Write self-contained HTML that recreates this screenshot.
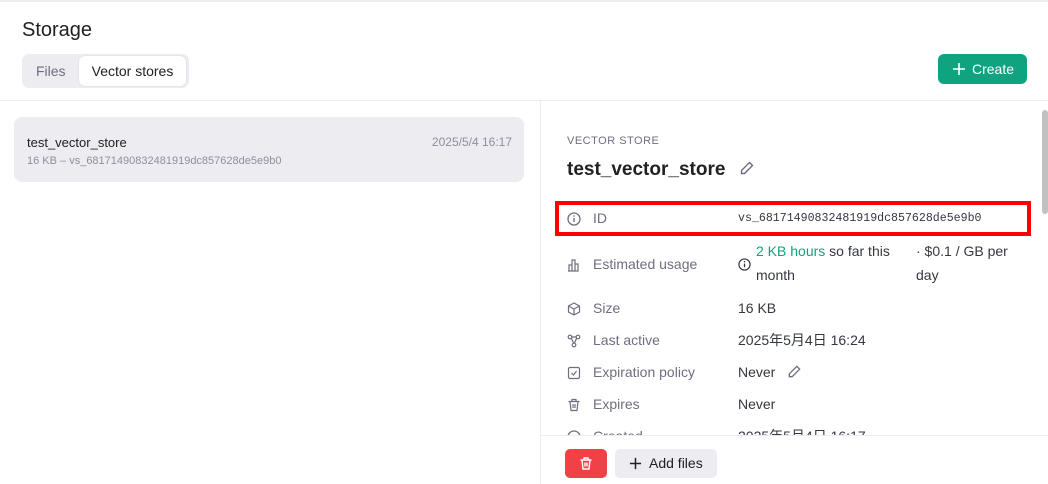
<!DOCTYPE html>
<html><head><meta charset="utf-8"><style>
*{box-sizing:border-box;margin:0;padding:0}
body{width:1048px;height:484px;overflow:hidden;background:#fff;font-family:"Liberation Sans","Noto Sans CJK SC",sans-serif;color:#202123;position:relative}
.topline{position:absolute;left:0;top:0;width:1048px;height:2px;background:#ececf1}
h1{position:absolute;left:22px;top:19px;font-size:20px;font-weight:500;color:#202123}
.tabs{position:absolute;left:22px;top:54px;width:167px;height:34px;background:#ececf1;border-radius:7px}
.tab1{position:absolute;left:14px;top:9px;font-size:14px;color:#6e6e80}
.tab2{position:absolute;left:57px;top:2px;width:107px;height:30px;background:#fff;border-radius:6px;font-size:14px;line-height:30px;text-align:center;box-shadow:0 0 1px rgba(0,0,0,.2)}
.create{position:absolute;left:938px;top:54px;width:89px;height:30px;background:#10a37f;border-radius:6px;color:#fff;font-size:14px;line-height:30px;padding-left:34px}
.create svg{position:absolute;left:14px;top:8px}
.hdiv{position:absolute;left:0;top:100px;width:1048px;height:1px;background:#ececf1}
.vdiv{position:absolute;left:540px;top:100px;width:1px;height:384px;background:#ececf1}
.card{position:absolute;left:14px;top:117px;width:510px;height:65px;background:#ececf1;border-radius:8px}
.card .n{position:absolute;left:13px;top:18px;font-size:13px;font-weight:500}
.card .d{position:absolute;right:12px;top:18px;font-size:12px;color:#8e8ea0}
.card .s{position:absolute;left:13px;top:38px;font-size:11px;color:#8e8ea0}
.lbl{position:absolute;left:567px;top:135px;font-size:11px;color:#6e6e80;letter-spacing:.5px;font-weight:500}
.title{position:absolute;left:567px;top:159px;font-size:19px;font-weight:700}
.row{position:absolute;left:567px;font-size:14px;color:#6e6e80}
.row svg{position:absolute;left:0;top:2px}
.row .k{position:absolute;left:26px;white-space:nowrap}
.v{position:absolute;left:738px;font-size:14px;color:#353740;white-space:nowrap}
.red{position:absolute;left:555px;top:201px;width:476px;height:35px;border:4px solid #f00}
.scroll{position:absolute;left:1042px;top:110px;width:6px;height:104px;background:#c1c1c1;border-radius:3px}
.fdiv{position:absolute;left:541px;top:435px;width:507px;height:1px;background:#ececf1}
.fmask{position:absolute;left:541px;top:436px;width:507px;height:48px;background:#fff}
.del{position:absolute;left:565px;top:449px;width:42px;height:29px;background:#ef4146;border-radius:5px}
.add{position:absolute;left:615px;top:449px;width:102px;height:29px;background:#ececf1;border-radius:5px;font-size:14px;line-height:29px;padding-left:34px;color:#202123}
</style></head><body>
<div class="topline"></div>
<h1>Storage</h1>
<div class="tabs"><span class="tab1">Files</span><div class="tab2">Vector stores</div></div>
<div class="create"><svg width="14" height="14" viewBox="0 0 14 14"><path d="M7 1v12M1 7h12" stroke="#fff" stroke-width="1.6"/></svg>Create</div>
<div class="hdiv"></div><div class="vdiv"></div>
<div class="card"><span class="n">test_vector_store</span><span class="d">2025/5/4 16:17</span><span class="s">16 KB – vs_68171490832481919dc857628de5e9b0</span></div>
<div class="lbl">VECTOR STORE</div>
<div class="title">test_vector_store <svg width="16" height="16" viewBox="0 0 16 16" style="margin-left:8px;vertical-align:-1px"><path d="M10.5 2.5l3 3-8 8H2.5v-3z" fill="none" stroke="#6e6e80" stroke-width="1.4"/></svg></div>

<div class="row" style="top:210px"><svg width="14" height="14" viewBox="0 0 14 14"><circle cx="7" cy="7" r="6" fill="none" stroke="#6e6e80" stroke-width="1.3"/><path d="M7 6v4" stroke="#6e6e80" stroke-width="1.4"/><circle cx="7" cy="4" r=".8" fill="#6e6e80"/></svg><span class="k">ID</span></div>
<div class="v" style="font-family:'Liberation Mono',monospace;font-size:11.6px;top:212px">vs_68171490832481919dc857628de5e9b0</div>
<div class="red"></div>

<div class="row" style="top:256px"><svg width="14" height="14" viewBox="0 0 14 14"><path d="M2 13V7h3v6M5 13V2h3v11M8 13V6h3v7H1" fill="none" stroke="#6e6e80" stroke-width="1.2"/></svg><span class="k">Estimated usage</span></div>
<svg style="position:absolute;left:738px;top:258px" width="13" height="13" viewBox="0 0 14 14"><circle cx="7" cy="7" r="6" fill="none" stroke="#353740" stroke-width="1.3"/><path d="M7 6v4" stroke="#353740" stroke-width="1.4"/><circle cx="7" cy="4" r=".8" fill="#353740"/></svg>
<div class="v" style="left:756px;top:239px;line-height:24px"><span style="color:#10a37f">2 KB hours</span> so far this<br>month</div>
<div class="v" style="left:916px;top:239px;line-height:24px">· $0.1 / GB per<br>day</div>

<div class="row" style="top:300px"><svg width="14" height="14" viewBox="0 0 14 14"><path d="M7 1l5.5 3v6L7 13 1.5 10V4zM1.5 4L7 7l5.5-3M7 7v6" fill="none" stroke="#6e6e80" stroke-width="1.2"/></svg><span class="k">Size</span></div>
<div class="v" style="top:300px">16 KB</div>
<div class="row" style="top:332px"><svg width="14" height="14" viewBox="0 0 14 14"><circle cx="3" cy="3" r="1.8" fill="none" stroke="#6e6e80" stroke-width="1.2"/><circle cx="11" cy="3" r="1.8" fill="none" stroke="#6e6e80" stroke-width="1.2"/><circle cx="7" cy="11" r="1.8" fill="none" stroke="#6e6e80" stroke-width="1.2"/><path d="M4.5 4.5L6.5 9M9.5 4.5L7.5 9M5 3h4" stroke="#6e6e80" stroke-width="1.2"/></svg><span class="k">Last active</span></div>
<div class="v" style="top:330px">2025年5月4日 16:24</div>
<div class="row" style="top:364px"><svg width="14" height="14" viewBox="0 0 14 14"><rect x="1.5" y="1.5" width="11" height="11" rx="1.5" fill="none" stroke="#6e6e80" stroke-width="1.2"/><path d="M4.5 7l2 2 3-4" fill="none" stroke="#6e6e80" stroke-width="1.2"/></svg><span class="k">Expiration policy</span></div>
<div class="v" style="top:364px">Never <svg width="15" height="15" viewBox="0 0 16 16" style="margin-left:8px;vertical-align:-2px"><path d="M10.5 2.5l3 3-8 8H2.5v-3z" fill="none" stroke="#6e6e80" stroke-width="1.4"/></svg></div>
<div class="row" style="top:396px"><svg width="14" height="14" viewBox="0 0 14 14"><path d="M1.5 3.5h11M5 3.5V1.5h4v2M3 3.5l1 9h6l1-9M6 6v4M8 6v4" fill="none" stroke="#6e6e80" stroke-width="1.2"/></svg><span class="k">Expires</span></div>
<div class="v" style="top:396px">Never</div>
<div class="row" style="top:428px"><svg width="14" height="14" viewBox="0 0 14 14"><circle cx="7" cy="7" r="6" fill="none" stroke="#6e6e80" stroke-width="1.3"/></svg><span class="k">Created</span></div>
<div class="v" style="top:426px">2025年5月4日 16:17</div>

<div class="scroll"></div>
<div class="fmask"></div><div class="fdiv"></div>
<div class="del"><svg style="position:absolute;left:14px;top:7px" width="14" height="15" viewBox="0 0 14 14"><path d="M1.5 3.5h11M5 3.5V1.5h4v2M3 3.5l1 9h6l1-9M6 6v4M8 6v4" fill="none" stroke="#fff" stroke-width="1.4"/></svg></div>
<div class="add"><svg style="position:absolute;left:14px;top:8px" width="13" height="13" viewBox="0 0 14 14"><path d="M7 1v12M1 7h12" stroke="#202123" stroke-width="1.6"/></svg>Add files</div>
</body></html>
